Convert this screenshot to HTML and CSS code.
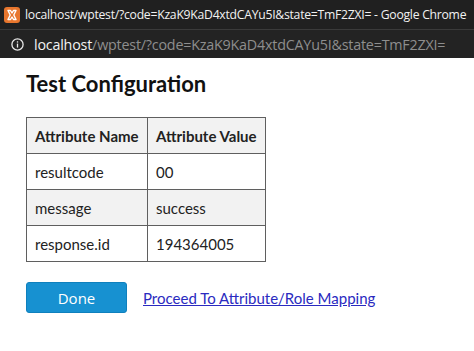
FILE: index.html
```html
<!DOCTYPE html>
<html lang="en">
<head>
  <meta charset="UTF-8">
  <title>Test Configuration</title>
  <link rel="stylesheet" href="styles.css">
</head>
<body>

<div class="titlebar">
  <svg class="favicon" width="16" height="16" viewBox="0 0 16 16">
    <rect width="16" height="16" rx="3" fill="#e8762d"/>
    <path d="M4 3.5h2.5l1.5 2.5 1.5-2.5H12L9.8 8 12 12.5H9.5L8 10l-1.5 2.5H4L6.2 8z" fill="none" stroke="#fff" stroke-width="1.4" stroke-linejoin="round"/>
  </svg>
  <span class="window-title">localhost/wptest/?code=KzaK9KaD4xtdCAYu5I&amp;state=TmF2ZXI= - Google Chrome</span>
</div>

<div class="addressbar">
  <svg class="info-icon" width="13" height="13" viewBox="0 0 13 13">
    <circle cx="6.5" cy="6.5" r="5.6" fill="none" stroke="#e8e8e8" stroke-width="1.3"/>
    <rect x="5.85" y="5.6" width="1.3" height="4" fill="#e8e8e8"/>
    <rect x="5.85" y="3.3" width="1.3" height="1.3" fill="#e8e8e8"/>
  </svg>
  <span class="url"><span class="host">localhost</span>/wptest/?code=KzaK9KaD4xtdCAYu5I&amp;state=TmF2ZXI=</span>
</div>

<div class="page">
  <h1>Test Configuration</h1>

  <table class="attr-table">
    <tr>
      <th>Attribute Name</th>
      <th>Attribute Value</th>
    </tr>
    <tr>
      <td>resultcode</td>
      <td>00</td>
    </tr>
    <tr class="alt">
      <td>message</td>
      <td>success</td>
    </tr>
    <tr>
      <td>response.id</td>
      <td>194364005</td>
    </tr>
  </table>

  <div class="actions">
    <button class="done-btn">Done</button>
    <a href="#" class="map-link">Proceed To Attribute/Role Mapping</a>
  </div>
</div>

</body>
</html>
```

FILE: styles.css
```css
body {
  margin: 0;
  background-color: #ffffff;
  font-family: "Lato", "Open Sans", sans-serif;
  color: #222222;
}
.titlebar {
  height: 29px;
  background-color: #202020;
  display: flex;
  align-items: center;
  padding-left: 4px;
  gap: 5px;
  overflow: hidden;
}
.favicon {
  flex-shrink: 0;
}
.window-title {
  font-family: "Open Sans", sans-serif;
  font-size: 12.2px;
  color: #f2f2f2;
  white-space: nowrap;
  letter-spacing: -0.25px;
}
.addressbar {
  height: 28px;
  background-color: #232323;
  border-top: 1px solid #3a3a3a;
  display: flex;
  align-items: center;
  padding-left: 11px;
  gap: 10px;
}
.url {
  font-family: "Open Sans", sans-serif;
  font-size: 14.3px;
  color: #8e8e8e;
  white-space: nowrap;
  letter-spacing: -0.2px;
}
.host {
  color: #f2f2f2;
}
.page {
  padding: 0 26px;
}
h1 {
  font-size: 22px;
  font-weight: bold;
  color: #111111;
  margin: 12px 0 20px;
}
.attr-table {
  border-collapse: collapse;
  font-size: 15px;
}
.attr-table th,
.attr-table td {
  border: 1px solid #5f5f5f;
  height: 35px;
  padding: 0 8px;
  text-align: left;
}
.attr-table th {
  background-color: #f2f2f2;
  font-weight: bold;
  color: #222222;
}
.attr-table th:first-child {
  width: 104px;
}
.attr-table th:last-child {
  width: 101px;
}
.attr-table tr.alt td {
  background-color: #f2f2f2;
}
.actions {
  display: flex;
  align-items: center;
  gap: 16px;
  margin-top: 20px;
}
.done-btn {
  width: 101px;
  height: 31px;
  background-color: #1791d1;
  border: 1px solid #0f80bd;
  border-radius: 3px;
  color: #ffffff;
  font-family: "Open Sans", Arial, sans-serif;
  font-size: 15px;
}
.map-link {
  color: #2a2ac0;
  font-size: 15px;
  text-decoration: underline;
}
```
